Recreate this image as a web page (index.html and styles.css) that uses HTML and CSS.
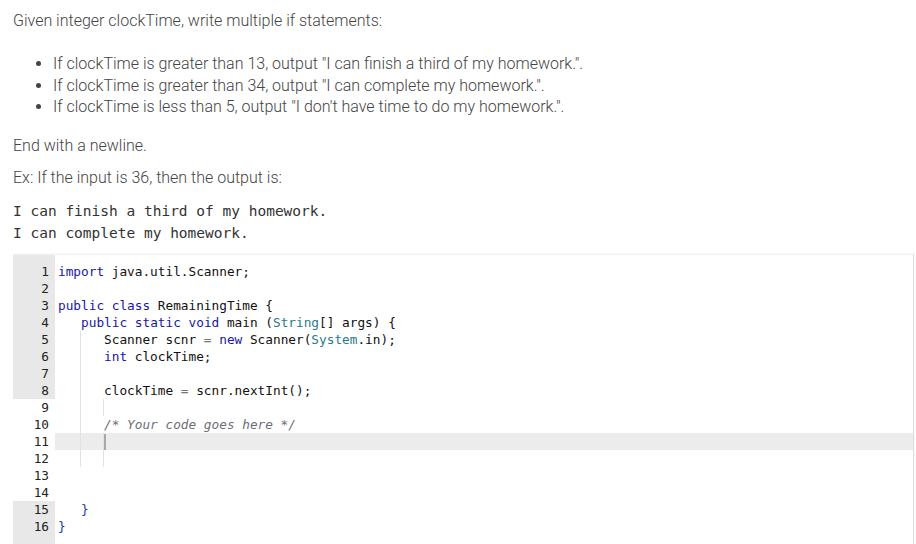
FILE: index.html
```html
<!DOCTYPE html>
<html>
<head>
<meta charset="utf-8">
<link rel="stylesheet" href="styles.css">
</head>
<body>
<div class="page">
  <p class="intro">Given integer clockTime, write multiple if statements:</p>
  <ul class="rules">
    <li>If clockTime is greater than 13, output "I can finish a third of my homework.".</li>
    <li>If clockTime is greater than 34, output "I can complete my homework.".</li>
    <li>If clockTime is less than 5, output "I don't have time to do my homework.".</li>
  </ul>
  <p class="end">End with a newline.</p>
  <p class="ex">Ex: If the input is 36, then the output is:</p>
  <pre class="sample">I can finish a third of my homework.
I can complete my homework.</pre>

  <div class="editor">
    <div class="row pad"><div class="ln"></div><div class="code"></div></div>
    <div class="row"><div class="ln">1</div><div class="code"><span class="kw">import</span> java.util.Scanner;</div></div>
    <div class="row"><div class="ln">2</div><div class="code"></div></div>
    <div class="row"><div class="ln">3</div><div class="code"><span class="kw">public</span> <span class="kw">class</span> RemainingTime {</div></div>
    <div class="row"><div class="ln">4</div><div class="code">   <span class="kw">public</span> <span class="kw">static</span> <span class="kw">void</span> main (<span class="ty">String</span>[] args) {</div></div>
    <div class="row"><div class="ln">5</div><div class="code"><span class="ig">   </span>   Scanner scnr <span class="op">=</span> <span class="kw">new</span> Scanner(<span class="ty">System</span>.in);</div></div>
    <div class="row"><div class="ln">6</div><div class="code"><span class="ig">   </span>   <span class="kw">int</span> clockTime;</div></div>
    <div class="row"><div class="ln">7</div><div class="code"><span class="ig">   </span></div></div>
    <div class="row"><div class="ln">8</div><div class="code"><span class="ig">   </span>   clockTime <span class="op">=</span> scnr.nextInt();</div></div>
    <div class="row edit"><div class="ln">9</div><div class="code"><span class="ig">   </span><span class="ig">   </span></div></div>
    <div class="row edit"><div class="ln">10</div><div class="code"><span class="ig">   </span>   <span class="cm">/* Your code goes here */</span></div></div>
    <div class="row edit active"><div class="ln">11</div><div class="code"><span class="ig">   </span><span class="ig">   </span><span class="cursor"></span></div></div>
    <div class="row edit"><div class="ln">12</div><div class="code"><span class="ig">   </span><span class="ig">   </span></div></div>
    <div class="row edit"><div class="ln">13</div><div class="code"></div></div>
    <div class="row edit"><div class="ln">14</div><div class="code"></div></div>
    <div class="row"><div class="ln">15</div><div class="code">   <span class="br">}</span></div></div>
    <div class="row"><div class="ln">16</div><div class="code"><span class="br">}</span></div></div>
    <div class="row tail"><div class="ln"></div><div class="code"></div></div>
  </div>
</div>
</body>
</html>
```

FILE: styles.css
```css
html, body {
  margin: 0;
  padding: 0;
  background: #ffffff;
}

.page {
  padding: 10px 3px 0 13px;
  font-family: Roboto, "Liberation Sans", sans-serif;
  font-weight: 300;
  font-size: 16px;
  line-height: 21.4px;
  color: #444444;
}

.intro {
  margin: 0;
}

.rules {
  margin: 22px 0 0 0;
  padding-left: 40px;
}

.end {
  margin: 17px 0 0 0;
}

.ex {
  margin: 10.5px 0 0 0;
}

.sample {
  margin: 12.3px 0 0 0;
  font-family: "DejaVu Sans Mono", "Liberation Mono", monospace;
  font-size: 14.5px;
  line-height: 22px;
  color: #333333;
}

.editor {
  margin-top: 10px;
  width: 900px;
  border-top: 1px solid #f2f2f2;
  box-shadow: 1px 0 1px #dcdcdc;
  font-family: "DejaVu Sans Mono", "Liberation Mono", monospace;
  font-size: 12.75px;
  line-height: 17px;
  font-weight: 400;
  color: #111111;
}

.row {
  display: flex;
  height: 17px;
}

.row.pad {
  height: 8px;
}

.row.tail {
  height: 20px;
}

.ln {
  width: 36px;
  flex: none;
  padding-right: 6px;
  text-align: right;
  background: #e8e8e8;
  color: #222222;
}

.row.edit .ln {
  background: #ffffff;
}

.code {
  flex: 1;
  padding-left: 3px;
  white-space: pre;
}

.row.active .code {
  background: #ececec;
}

.ig {
  display: inline-block;
  vertical-align: top;
  height: 17px;
  box-shadow: inset -1px 0 0 #e2e2e2;
}

.cursor {
  display: inline-block;
  vertical-align: top;
  width: 2px;
  height: 16px;
  margin-top: 1px;
  background: #a8a8a8;
}

.kw {
  color: #1717a8;
}

.ty {
  color: #2a7b8c;
}

.op {
  color: #757575;
}

.cm {
  color: #6e6e78;
  font-style: italic;
}

.br {
  color: #1c3c9c;
}
```
